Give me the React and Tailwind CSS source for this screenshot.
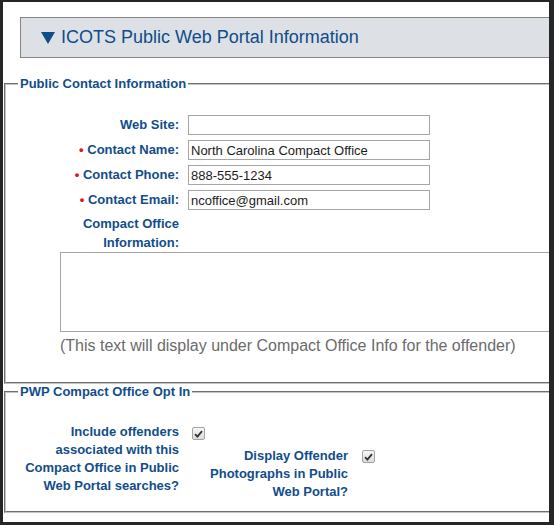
import React from 'react';

const font = { fontFamily: '"Liberation Sans", Arial, sans-serif' };

function RequiredMark() {
    return <span className="text-[#e0141e]">•</span>;
}

function Checkbox() {
    return (
        <span className="w-[13px] h-[13px] shrink-0 rounded-[2px] border border-[#a3a3a3] bg-gradient-to-b from-[#f6f6f6] to-[#dcdcdc] flex items-center justify-center">
            <svg width="9" height="8" viewBox="0 0 9 8">
                <path d="M1 4.2 L3.4 6.6 L8 1.2" fill="none" stroke="#333" strokeWidth="1.8" />
            </svg>
        </span>
    );
}

function FieldRow({ label, required, value }) {
    return (
        <div className="flex items-center h-[20px]">
            <label className="w-[173px] text-right font-bold text-[13px] text-[#124d8b]">
                {required && <RequiredMark />}
                {required ? ' ' : ''}
                {label}
            </label>
            <div className="ml-[9px] w-[242px] h-[20px] border border-[#a6a6a6] px-[2px] flex items-center text-[13px] text-[#1c1c1c] leading-none">
                {value}
            </div>
        </div>
    );
}

export default function App() {
    return (
        <div className="w-[554px] h-[525px] bg-[#262626] pt-[2px] pl-[3px] pr-[5px] pb-[3px]" style={font}>
            <div className="w-full h-full bg-white overflow-hidden flex flex-col">
                {/* Section header */}
                <div className="mt-[15px] ml-[17px] w-[600px] h-[41px] shrink-0 border border-[#858585] bg-[#dde1e5] flex items-center pl-[20px]">
                    <svg width="14" height="12" viewBox="0 0 14 12" className="mt-[1px]">
                        <polygon points="0,0 14,0 7,12" fill="#0f4c8a" />
                    </svg>
                    <span className="ml-[6px] text-[18px] text-[#0f4c8a]">ICOTS Public Web Portal Information</span>
                </div>

                {/* Contact details */}
                <fieldset className="mt-[18px] ml-[1px] w-[620px] shrink-0 border-2 [border-style:groove] border-[#c4c4c4] pb-[27px]">
                    <legend className="ml-[12px] px-[2px] text-[13px] leading-[16px] font-bold text-[#124d8b]">
                        Public Contact Information
                    </legend>
                    <div className="pt-[23px] flex flex-col gap-[5px]">
                        <FieldRow label="Web Site:" value="" />
                        <FieldRow label="Contact Name:" required value="North Carolina Compact Office" />
                        <FieldRow label="Contact Phone:" required value="888-555-1234" />
                        <FieldRow label="Contact Email:" required value="ncoffice@gmail.com" />
                    </div>
                    <div className="mt-[4px] w-[173px] flex justify-end">
                        <label className="w-[100px] text-right font-bold text-[13px] leading-[19px] text-[#124d8b]">
                            Compact Office Information:
                        </label>
                    </div>
                    <div className="ml-[54px] w-[560px] h-[80px] border border-[#a6a6a6]" />
                    <p className="ml-[54px] mt-[4px] text-[16px] leading-[19px] text-[#6b6b6b]">
                        (This text will display under Compact Office Info for the offender)
                    </p>
                </fieldset>

                {/* Opt-in flags */}
                <fieldset className="ml-[1px] w-[620px] shrink-0 border-2 [border-style:groove] border-[#c4c4c4] pb-[10px]">
                    <legend className="ml-[12px] px-[2px] text-[13px] leading-[16px] font-bold text-[#124d8b]">
                        PWP Compact Office Opt In
                    </legend>
                    <div className="pt-[23px] flex items-start">
                        <div className="ml-[13px] flex items-start">
                            <span className="w-[160px] text-right font-bold text-[13px] leading-[18px] text-[#124d8b]">
                                Include offenders associated with this Compact Office in Public Web Portal searches?
                            </span>
                            <span className="ml-[13px] mt-[4px]">
                                <Checkbox />
                            </span>
                        </div>
                        <div className="mt-[24px] flex items-start">
                            <span className="w-[143px] text-right font-bold text-[13px] leading-[18px] text-[#124d8b]">
                                Display Offender Photographs in Public Web Portal?
                            </span>
                            <span className="ml-[14px] mt-[3px]">
                                <Checkbox />
                            </span>
                        </div>
                    </div>
                </fieldset>
            </div>
        </div>
    );
}
